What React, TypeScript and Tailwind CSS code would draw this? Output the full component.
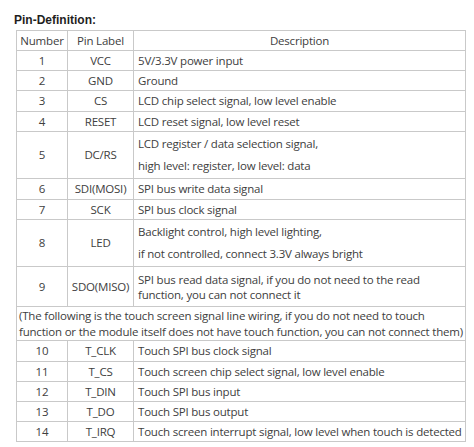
const rows: Array<{ num: string; label: string; desc: string[]; h: string; lead?: string }> = [
  { num: '1', label: 'VCC', desc: ['5V/3.3V power input'], h: 'h-[20px]' },
  { num: '2', label: 'GND', desc: ['Ground'], h: 'h-[20px]' },
  { num: '3', label: 'CS', desc: ['LCD chip select signal, low level enable'], h: 'h-[21px]' },
  { num: '4', label: 'RESET', desc: ['LCD reset signal, low level reset'], h: 'h-[20px]' },
  {
    num: '5',
    label: 'DC/RS',
    desc: ['LCD register / data selection signal,', 'high level: register, low level: data'],
    h: 'h-[47px]',
    lead: 'leading-[22px]',
  },
  { num: '6', label: 'SDI(MOSI)', desc: ['SPI bus write data signal'], h: 'h-[21px]' },
  { num: '7', label: 'SCK', desc: ['SPI bus clock signal'], h: 'h-[20px]' },
  {
    num: '8',
    label: 'LED',
    desc: ['Backlight control, high level lighting,', 'if not controlled, connect 3.3V always bright'],
    h: 'h-[47px]',
    lead: 'leading-[22px]',
  },
  {
    num: '9',
    label: 'SDO(MISO)',
    desc: ['SPI bus read data signal, if you do not need to the read', 'function, you can not connect it'],
    h: 'h-[40px]',
    lead: 'leading-[15px]',
  },
];

const touchRows = [
  { num: '10', label: 'T_CLK', desc: 'Touch SPI bus clock signal', h: 'h-[21px]' },
  { num: '11', label: 'T_CS', desc: 'Touch screen chip select signal, low level enable', h: 'h-[20px]' },
  { num: '12', label: 'T_DIN', desc: 'Touch SPI bus input', h: 'h-[20px]' },
  { num: '13', label: 'T_DO', desc: 'Touch SPI bus output', h: 'h-[20px]' },
  { num: '14', label: 'T_IRQ', desc: 'Touch screen interrupt signal, low level when touch is detected', h: 'h-[20px]' },
];

const Row = ({ num, label, desc, h, lead }: { num: string; label: string; desc: string[]; h: string; lead?: string }) => (
  <div className={`grid grid-cols-[51px_66px_1fr] border-b border-[#c9c9c9] ${h}`}>
    <div className="flex items-center justify-center border-r border-[#c9c9c9]">{num}</div>
    <div className="flex items-center justify-center border-r border-[#c9c9c9]">{label}</div>
    <div className={`flex flex-col justify-center whitespace-nowrap pl-[4px] ${lead ?? 'leading-[16px]'}`}>
      {desc.map((line) => (
        <span key={line}>{line}</span>
      ))}
    </div>
  </div>
);

export default function App() {
  return (
    <div className="h-[447px] w-[474px] bg-white">
      <div
        className="pl-[14px] pt-[13px] text-[12px] font-bold leading-[15px] text-[#1f1f1f]"
        style={{ fontFamily: '"Liberation Sans", Arial, sans-serif' }}
      >
        Pin-Definition:
      </div>
      <div
        className="ml-[16px] mt-[2px] w-[450px] border-x border-t border-[#c9c9c9] text-[11.5px] tracking-[-0.2px] text-[#404040]"
        style={{ fontFamily: '"Open Sans", "Noto Sans", sans-serif' }}
      >
        <div className="grid h-[20px] grid-cols-[51px_66px_1fr] border-b border-[#c9c9c9]">
          <div className="flex items-center justify-center border-r border-[#c9c9c9]">Number</div>
          <div className="flex items-center justify-center border-r border-[#c9c9c9]">Pin Label</div>
          <div className="flex items-center justify-center">Description</div>
        </div>
        {rows.map((r) => (
          <Row key={r.num} {...r} />
        ))}
        <div className="flex h-[34px] flex-col justify-center whitespace-nowrap border-b border-[#c9c9c9] pl-[2px] leading-[16px]">
          <span>(The following is the touch screen signal line wiring, if you do not need to touch</span>
          <span>function or the module itself does not have touch function, you can not connect them)</span>
        </div>
        {touchRows.map((r) => (
          <Row key={r.num} num={r.num} label={r.label} desc={[r.desc]} h={r.h} />
        ))}
      </div>
    </div>
  );
}
